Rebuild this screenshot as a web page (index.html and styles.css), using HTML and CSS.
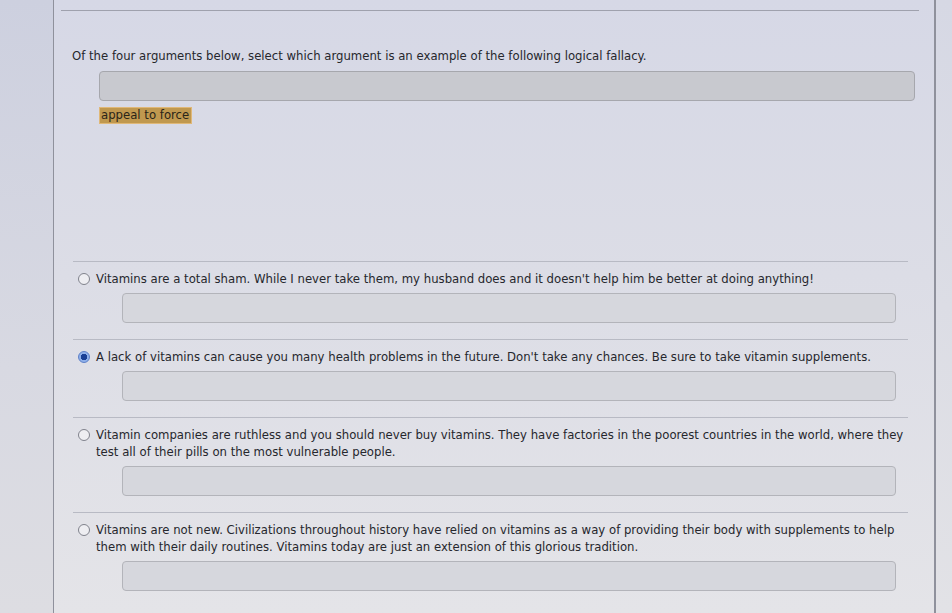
FILE: index.html
```html
<!DOCTYPE html>
<html>
<head>
<meta charset="utf-8">
<link rel="stylesheet" href="styles.css">
</head>
<body>
<div class="page">
  <div class="gutter-left"></div>
  <div class="panel">
    <div class="top-rule"></div>
    <p class="question">Of the four arguments below, select which argument is an example of the following logical fallacy.</p>
    <div class="answer-box q-box"></div>
    <div class="fallacy"><span class="hl">appeal to force</span></div>
    <div class="options">
      <div class="option">
        <div class="opt-line">
          <span class="radio"></span>
          <span class="opt-text">Vitamins are a total sham. While I never take them, my husband does and it doesn't help him be better at doing anything!</span>
        </div>
        <div class="answer-box opt-box"></div>
      </div>
      <div class="option">
        <div class="opt-line">
          <span class="radio checked"></span>
          <span class="opt-text">A lack of vitamins can cause you many health problems in the future. Don't take any chances. Be sure to take vitamin supplements.</span>
        </div>
        <div class="answer-box opt-box"></div>
      </div>
      <div class="option">
        <div class="opt-line">
          <span class="radio"></span>
          <span class="opt-text">Vitamin companies are ruthless and you should never buy vitamins. They have factories in the poorest countries in the world, where they test all of their pills on the most vulnerable people.</span>
        </div>
        <div class="answer-box opt-box"></div>
      </div>
      <div class="option">
        <div class="opt-line">
          <span class="radio"></span>
          <span class="opt-text">Vitamins are not new. Civilizations throughout history have relied on vitamins as a way of providing their body with supplements to help them with their daily routines. Vitamins today are just an extension of this glorious tradition.</span>
        </div>
        <div class="answer-box opt-box"></div>
      </div>
    </div>
  </div>
  <div class="gutter-right"></div>
</div>
</body>
</html>
```

FILE: styles.css
```css
html, body {
  margin: 0;
  padding: 0;
}
body {
  width: 952px;
  height: 613px;
  overflow: hidden;
  font-family: "DejaVu Sans", Verdana, sans-serif;
  font-size: 11.7px;
  color: #26272d;
  background: linear-gradient(180deg, #cdd0df 0%, #d8d9e2 60%, #dddde2 100%);
}
.page {
  display: flex;
  height: 613px;
}
.gutter-left {
  width: 53px;
  flex: none;
}
.gutter-right {
  width: 16px;
  flex: none;
  background: linear-gradient(180deg, #d6d8e4 0%, #e2e2e6 100%);
}
.panel {
  flex: 1;
  border-left: 1px solid #8f919c;
  border-right: 2px solid #8f919c;
  background: linear-gradient(180deg, #d6d8e6 0%, #dcdde6 45%, #e4e4e8 100%);
  padding-top: 10px;
}
.top-rule {
  margin: 0 15px 0 7px;
  border-top: 1px solid #9fa1ad;
}
.question {
  margin: 38px 0 0 18px;
  line-height: 14px;
}
.answer-box {
  height: 30px;
  border: 1px solid #a6a7ad;
  border-radius: 4px;
  box-sizing: border-box;
}
.q-box {
  margin: 8px 19px 0 45px;
  background: #c8c9cf;
}
.fallacy {
  margin: 6px 0 0 45px;
  line-height: 15px;
}
.hl {
  display: inline-block;
  background: #c0984f;
  color: #2a2418;
  padding: 0 2px 0 1px;
  border: 1px solid #e0b878;
}
.options {
  margin-top: 137px;
}
.option {
  margin: 0 26px 0 19px;
  border-top: 1px solid #b8bac4;
  padding: 9px 0 16px 0;
}
.opt-line {
  display: flex;
  align-items: flex-start;
  gap: 6px;
  padding-left: 5px;
  line-height: 17px;
}
.radio {
  flex: none;
  width: 10px;
  height: 10px;
  border: 1px solid #80828c;
  border-radius: 50%;
  background: #eeeef2;
  margin-top: 2px;
  box-sizing: content-box;
}
.radio.checked {
  border-color: #5c7fc8;
  background: radial-gradient(circle, #1a3f95 0 3px, #8fb0ea 3.5px 5px);
}
.opt-text {
  flex: 1;
}
.opt-box {
  margin: 5px 12px 0 49px;
  background: #d6d7dd;
  border-color: #b3b4ba;
}
```
